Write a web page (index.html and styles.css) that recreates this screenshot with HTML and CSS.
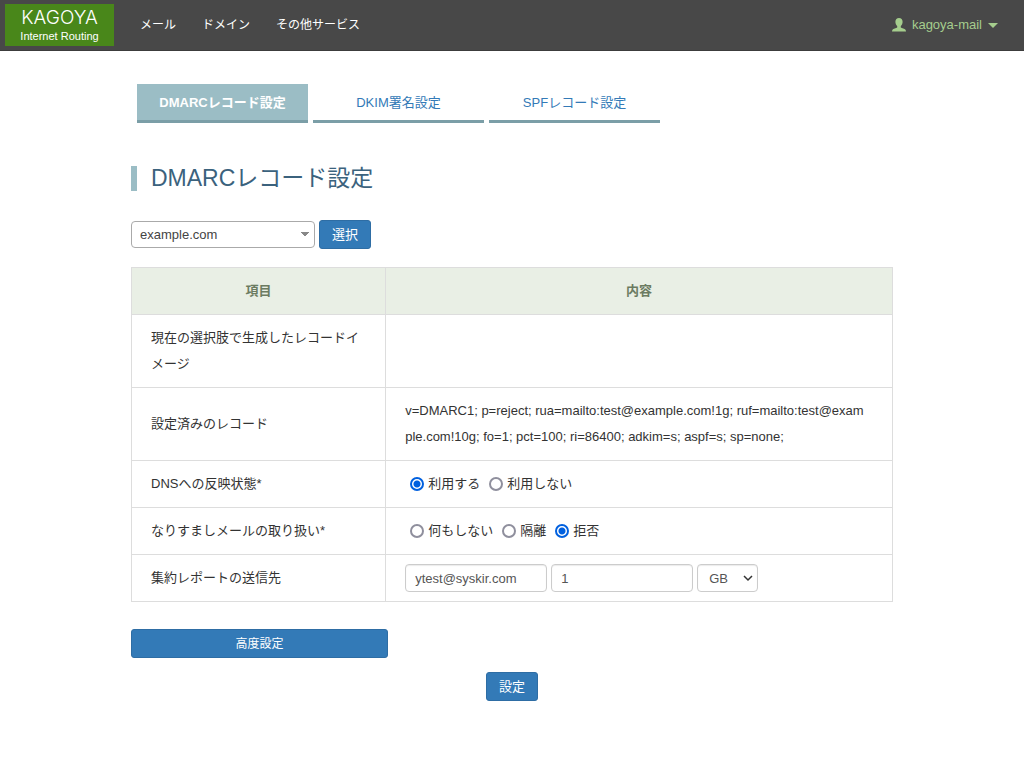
FILE: index.html
```
<!DOCTYPE html>
<html lang="ja">
<head>
    <meta charset="UTF-8">
    <meta name="viewport" content="width=device-width, initial-scale=1.0">
    <title>DMARCレコード設定</title>
    <link rel="stylesheet" href="styles.css">
</head>
<body>
    <header class="header">
        <a class="logo" href="#">
            <span class="logo-name">KAGOYA</span>
            <span class="logo-sub">Internet Routing</span>
        </a>
        <nav class="menu">
            <a href="#">メール</a>
            <a href="#">ドメイン</a>
            <a href="#">その他サービス</a>
        </nav>
        <a class="user" href="#">
            <svg width="14" height="14" viewBox="0 0 14 14" aria-hidden="true">
                <path fill="currentColor" d="M7 0C4.800 0 3.400 1.500 3.400 3.700c0 1.900.7 3.500 1.800 4.400v1.400c-1 .7-4 1.300-4.700 2.300C.1 12.400 0 13 0 13.600h14c0-.6-.1-1.200-.5-1.800-.7-1-3.700-1.600-4.700-2.300V8.100c1.100-.9 1.800-2.500 1.800-4.400C10.600 1.500 9.200 0 7 0z"/>
            </svg>
            kagoya-mail
            <span class="caret"></span>
        </a>
    </header>

    <main class="container">
        <nav class="tabs">
            <a class="tab active" href="#">DMARCレコード設定</a>
            <a class="tab" href="#">DKIM署名設定</a>
            <a class="tab" href="#">SPFレコード設定</a>
        </nav>

        <h1>DMARCレコード設定</h1>

        <form class="domain-form">
            <select class="domain" aria-label="ドメイン">
                <option>example.com</option>
            </select>
            <button class="btn" type="button">選択</button>
        </form>

        <form>
            <table class="settings">
                <thead>
                    <tr>
                        <th class="col-item" scope="col">項目</th>
                        <th scope="col">内容</th>
                    </tr>
                </thead>
                <tbody>
                    <tr>
                        <td>現在の選択肢で生成したレコードイメージ</td>
                        <td></td>
                    </tr>
                    <tr>
                        <td>設定済みのレコード</td>
                        <td class="record">v=DMARC1; p=reject; rua=mailto:test@example.com!1g; ruf=mailto:test@example.com!10g; fo=1; pct=100; ri=86400; adkim=s; aspf=s; sp=none;</td>
                    </tr>
                    <tr>
                        <td>DNSへの反映状態*</td>
                        <td>
                            <div class="radios">
                                <label><input type="radio" name="dns" checked>利用する</label>
                                <label><input type="radio" name="dns">利用しない</label>
                            </div>
                        </td>
                    </tr>
                    <tr>
                        <td>なりすましメールの取り扱い*</td>
                        <td>
                            <div class="radios">
                                <label><input type="radio" name="policy">何もしない</label>
                                <label><input type="radio" name="policy">隔離</label>
                                <label><input type="radio" name="policy" checked>拒否</label>
                            </div>
                        </td>
                    </tr>
                    <tr>
                        <td><label for="report">集約レポートの送信先</label></td>
                        <td class="report-cell">
                            <div class="report">
                                <input class="field" type="text" id="report" value="ytest@syskir.com">
                                <input class="field" type="text" value="1" aria-label="サイズ">
                                <span class="unit">
                                    <select class="field" aria-label="単位">
                                        <option>GB</option>
                                    </select>
                                    <svg width="10" height="7" viewBox="0 0 10 7" aria-hidden="true">
                                        <path d="M1 1l4 4 4-4" fill="none" stroke="currentColor" stroke-width="1.500"/>
                                    </svg>
                                </span>
                            </div>
                        </td>
                    </tr>
                </tbody>
            </table>

            <button class="btn btn-wide" type="button">高度設定</button>
            <div class="submit">
                <button class="btn" type="button">設定</button>
            </div>
        </form>
    </main>
</body>
</html>
```

FILE: styles.css
```
*{
    box-sizing: border-box;
}
body{
    margin: 0;
    background-color: #fff;
    color: #333;
    font-family: "Liberation Sans", "Noto Sans CJK JP", sans-serif;
    font-size: 13px;
    line-height: 26px;
}
a{
    color: #337ab7;
    text-decoration: none;
}
button, input, select{
    font-family: inherit;
    font-size: inherit;
}

/* header */
.header{
    display: flex;
    align-items: center;
    height: 51px;
    padding: 0 26px 0 5px;
    background-color: #484848;
    border-bottom: 1px solid #3c3c3c;
}
.logo{
    display: flex;
    flex-direction: column;
    align-items: center;
    justify-content: center;
    width: 109px;
    height: 42px;
    background-color: #49871a;
    color: #fff;
}
.logo-name{
    font-family: Inter, sans-serif;
    font-size: 19px;
    font-weight: 300;
    line-height: 22px;
}
.logo-sub{
    font-size: 11px;
    line-height: 14px;
}
.menu{
    display: flex;
    gap: 26px;
    margin-left: 26px;
    font-size: 12px;
}
.menu a{
    color: #fff;
}
.user{
    display: flex;
    align-items: center;
    gap: 6px;
    margin-left: auto;
    color: #a5cd8d;
}
.caret{
    border: 5px solid transparent;
    border-top-color: #a5cd8d;
    border-bottom: 0;
}

/* contents */
.container{
    padding: 33px 131px;
}
.tabs{
    display: flex;
    gap: 5px;
    padding-left: 6px;
}
.tab{
    width: 171px;
    padding: 6px 0 4px;
    border-bottom: 3px solid #7b9ea7;
    text-align: center;
}
.tab.active{
    background-color: #9bbdc5;
    color: #fff;
    font-weight: bold;
}
h1{
    margin: 43px 0 29px;
    padding-left: 14px;
    border-left: 6px solid #9bbdc5;
    color: #3b627d;
    font-size: 23px;
    font-weight: normal;
    line-height: 25px;
}
.domain-form{
    display: flex;
    align-items: center;
    gap: 4px;
    margin-bottom: 18px;
}
.domain{
    appearance: none;
    width: 184px;
    height: 27px;
    padding: 0 8px;
    border: 1px solid #aaa;
    border-radius: 4px;
    background: linear-gradient(to bottom right, #888 50%, transparent 50%) right 5px center / 4px 5px no-repeat,
        linear-gradient(to bottom left, #888 50%, transparent 50%) right 9px center / 4px 5px no-repeat, #fff;
    color: #444;
}
.btn{
    height: 29px;
    padding: 0 12px;
    border: 1px solid #2e6da4;
    border-radius: 3px;
    background-color: #337ab7;
    color: #fff;
    line-height: 18px;
    cursor: pointer;
}
.btn:hover{
    background-color: #286090;
}

/* settings table */
.settings{
    width: 100%;
    border-collapse: collapse;
    table-layout: fixed;
}
.settings th, .settings td{
    padding: 10px 19px;
    border: 1px solid #ddd;
    text-align: left;
}
.settings th{
    background-color: #e9efe5;
    color: #6b7b61;
    text-align: center;
}
.settings .col-item{
    width: 33.4%;
}
.settings .record{
    padding-right: 26px;
    word-break: break-all;
}
.radios{
    display: flex;
    gap: 9px;
    padding-left: 5px;
}
.radios label{
    display: flex;
    align-items: center;
    gap: 4px;
}
.radios input{
    appearance: none;
    width: 14px;
    height: 14px;
    margin: 0;
    border: 2px solid #8f8f9d;
    border-radius: 50%;
    background-color: #fff;
}
.radios input:checked{
    border-color: #0060df;
    background: radial-gradient(#0060df 3px, #fff 4px);
}
.settings .report-cell{
    padding: 9px 0 9px 19px;
}
.report{
    display: flex;
    gap: 4px;
}
.field{
    width: 142px;
    height: 28px;
    padding: 0 9px;
    border: 1px solid #ccc;
    border-radius: 4px;
    background-color: #fff;
    box-shadow: inset 0 1px 1px rgba(0, 0, 0, 0.08);
    color: #555;
}
.unit{
    display: grid;
    align-items: center;
    width: 61px;
}
.unit .field{
    grid-area: 1 / 1;
    appearance: none;
    width: 100%;
    padding: 0 11px;
}
.unit svg{
    grid-area: 1 / 1;
    justify-self: end;
    margin-right: 5px;
    pointer-events: none;
}
.btn-wide{
    display: block;
    width: 33.7%;
    margin-top: 27px;
    font-size: 12px;
}
.submit{
    display: flex;
    justify-content: center;
    margin-top: 14px;
}
```
